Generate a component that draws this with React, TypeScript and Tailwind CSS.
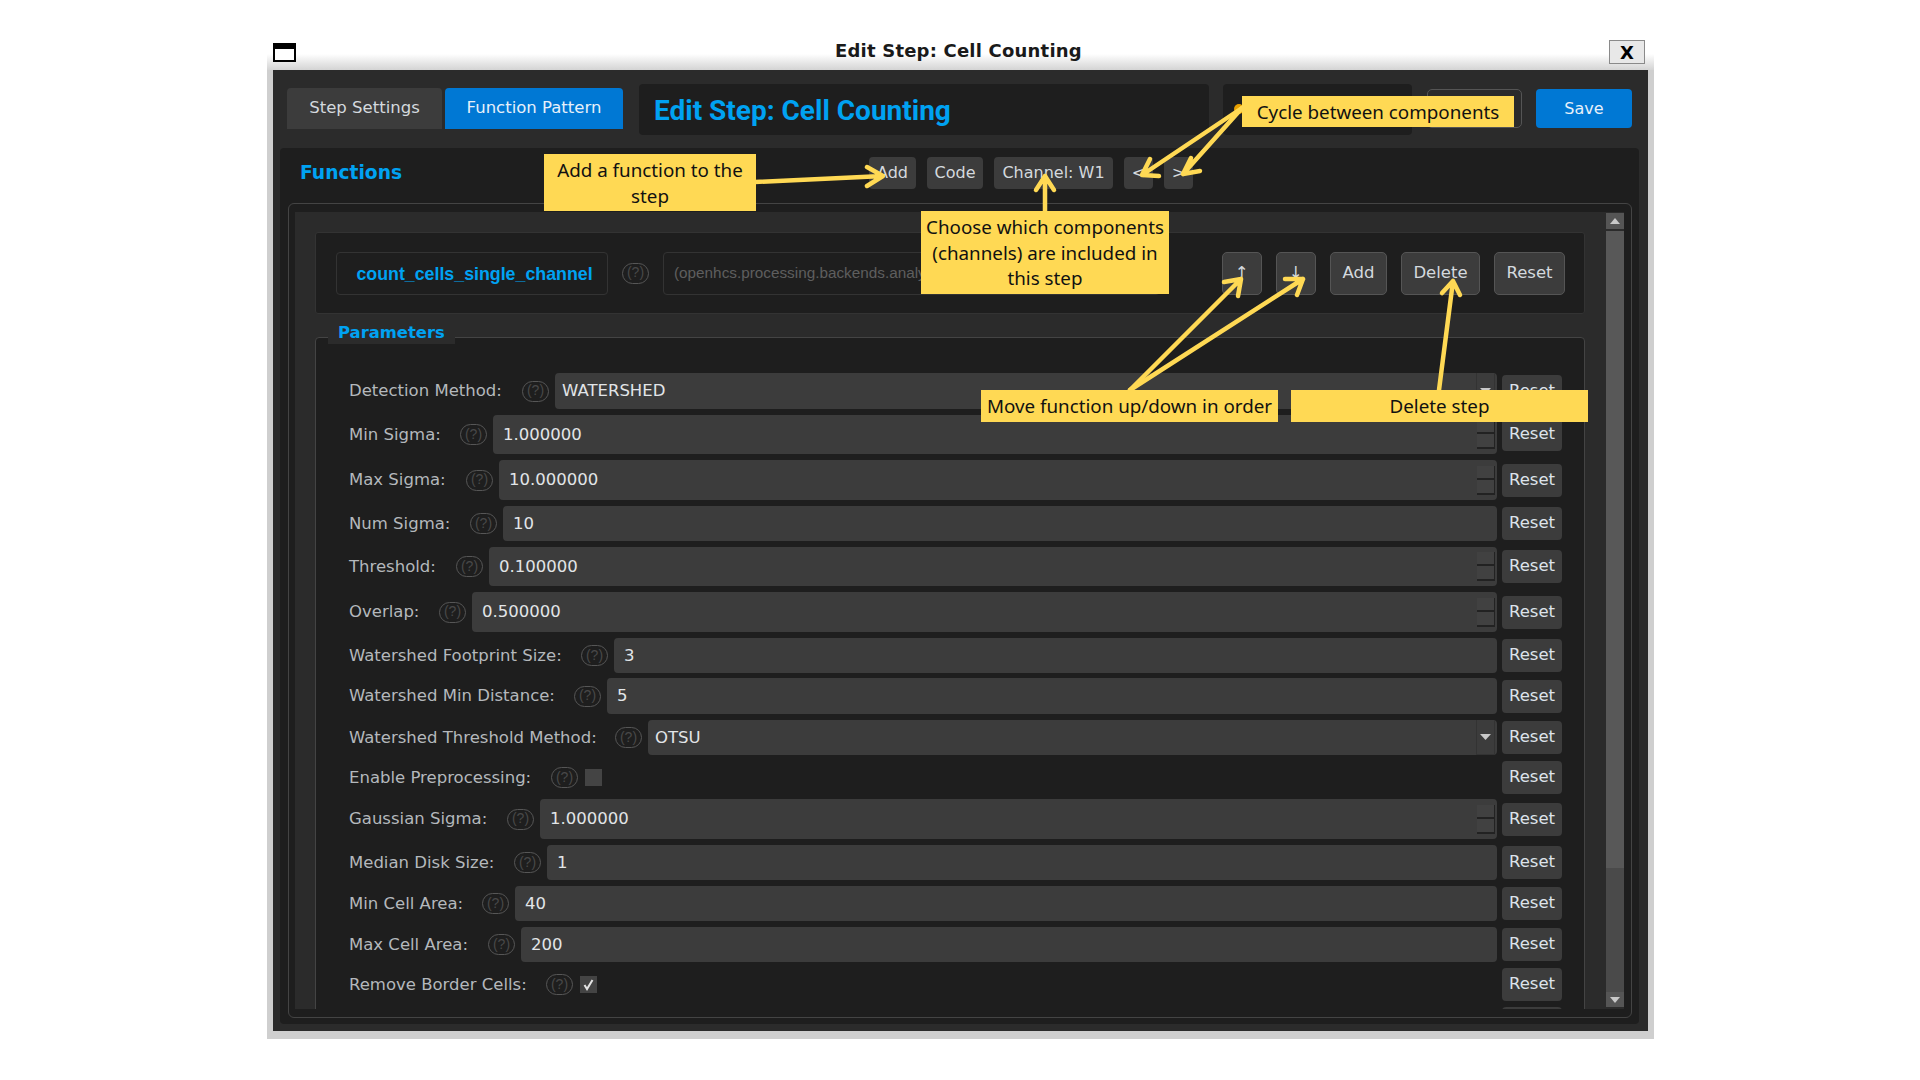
import React from "react";

type Row = {
  label: string;
  labelW: string;
  h: string;
  kind: "spin" | "plain" | "combo" | "check";
  value?: string;
  pad?: string;
  checked?: boolean;
  extra?: string;
};

const rows: Row[] = [
  { label: "Detection Method:", labelW: "w-[173px]", h: "h-[36px]", kind: "combo", value: "WATERSHED", pad: "pl-[7px]" },
  { label: "Min Sigma:", labelW: "w-[111px]", h: "h-[39px]", kind: "spin", value: "1.000000", pad: "pl-[10px]" },
  { label: "Max Sigma:", labelW: "w-[117px]", h: "h-[40px]", kind: "spin", value: "10.000000", pad: "pl-[10px]" },
  { label: "Num Sigma:", labelW: "w-[121px]", h: "h-[35px]", kind: "plain", value: "10", pad: "pl-[10px]" },
  { label: "Threshold:", labelW: "w-[107px]", h: "h-[39px]", kind: "spin", value: "0.100000", pad: "pl-[10px]" },
  { label: "Overlap:", labelW: "w-[90px]", h: "h-[40px]", kind: "spin", value: "0.500000", pad: "pl-[10px]" },
  { label: "Watershed Footprint Size:", labelW: "w-[232px]", h: "h-[35px]", kind: "plain", value: "3", pad: "pl-[10px]" },
  { label: "Watershed Min Distance:", labelW: "w-[225px]", h: "h-[36px]", kind: "plain", value: "5", pad: "pl-[10px]", extra: "-mt-px" },
  { label: "Watershed Threshold Method:", labelW: "w-[266px]", h: "h-[35px]", kind: "combo", value: "OTSU", pad: "pl-[7px]" },
  { label: "Enable Preprocessing:", labelW: "w-[202px]", h: "h-[33px]", kind: "check" },
  { label: "Gaussian Sigma:", labelW: "w-[158px]", h: "h-[40px]", kind: "spin", value: "1.000000", pad: "pl-[10px]", extra: "-mt-px" },
  { label: "Median Disk Size:", labelW: "w-[165px]", h: "h-[35px]", kind: "plain", value: "1", pad: "pl-[10px]" },
  { label: "Min Cell Area:", labelW: "w-[133px]", h: "h-[35px]", kind: "plain", value: "40", pad: "pl-[10px]" },
  { label: "Max Cell Area:", labelW: "w-[139px]", h: "h-[35px]", kind: "plain", value: "200", pad: "pl-[10px]" },
  { label: "Remove Border Cells:", labelW: "w-[197px]", h: "h-[33px]", kind: "check", checked: true },
];

const ui = { fontFamily: '"DejaVu Sans", sans-serif' };

function Help() {
  return (
    <span className="flex h-[21px] w-[27px] shrink-0 items-center justify-center rounded-full border border-[#565656] pb-[1px] text-[14px] text-[#484848] font-['Liberation_Sans',sans-serif]">
      (?)
    </span>
  );
}

function Spinner() {
  return (
    <span className="mr-[2px] flex w-[18px] shrink-0 flex-col">
      <span className="h-[14px] border-r border-b-2 border-[#222222] bg-[#414141]" />
      <span className="h-[15px] border-r border-b-2 border-[#222222] bg-[#414141]" />
    </span>
  );
}

function ComboArrow() {
  return (
    <span className="mr-[2px] flex h-full w-[19px] shrink-0 items-center justify-center border-l border-b border-r border-[#333333] bg-[#3c3c3c]">
      <svg width="11" height="6" viewBox="0 0 11 6">
        <path d="M0 0h11L5.5 6z" fill="#c8c8c8" />
      </svg>
    </span>
  );
}

function ResetButton() {
  return (
    <button className="flex h-[33px] w-[60px] shrink-0 items-center justify-center rounded-[4px] bg-[#3c3c3c] text-[16.5px] text-[#dde3ea]">
      Reset
    </button>
  );
}

function ParamRow({ row }: { row: Row }) {
  return (
    <div className={`flex items-center ${row.h} ${row.extra ?? ""}`}>
      <span className={`${row.labelW} shrink-0 whitespace-nowrap pt-[1px] text-[16.5px] text-[#b4b8bc]`}>{row.label}</span>
      <Help />
      {row.kind === "check" ? (
        <div className="flex flex-1 items-center pl-[7px]">
          <span className="flex h-[17px] w-[17px] items-center justify-center bg-[#444444]">
            {row.checked && (
              <svg width="13" height="13" viewBox="0 0 13 13">
                <path d="M2.5 7l2.5 4 5.5-9" fill="none" stroke="#e4e4e4" strokeWidth="2" />
              </svg>
            )}
          </span>
        </div>
      ) : (
        <div
          className={`ml-[6px] flex h-full flex-1 items-center justify-between rounded-[4px] bg-[#3c3c3c] ${row.pad} text-[16.5px] text-[#e2e5e8]`}
        >
          <span className="pt-[1px]">{row.value}</span>
          {row.kind === "spin" && <Spinner />}
          {row.kind === "combo" && <ComboArrow />}
        </div>
      )}
      <div className="ml-[5px] flex">
        <ResetButton />
      </div>
    </div>
  );
}

function ToolButton({ w, children }: { w: string; children: React.ReactNode }) {
  return (
    <button
      className={`flex h-[32px] ${w} items-center justify-center rounded-[4px] bg-[#3c3c3c] text-[16px] text-[#d4d9de]`}
    >
      {children}
    </button>
  );
}

function CardButton({ w, children }: { w: string; children: React.ReactNode }) {
  return (
    <button
      className={`flex h-[43px] ${w} items-center justify-center rounded-[5px] border border-[#555555] bg-[#3c3c3c] text-[16.5px] text-[#d4d9de]`}
    >
      {children}
    </button>
  );
}

const callout =
  "absolute flex items-center justify-center bg-[#ffd954] pt-[2px] text-center text-[18.8px] leading-[25.5px] text-[#111111] font-['Noto_Sans',sans-serif]";

function Arrows() {
  const lines = [
    "M755 182L883 176M867 167L883 176L867 186",
    "M1045 211V176M1036 190L1045 176L1054 190",
    "M1242 108L1142 175M1150 159L1142 175L1159 176",
    "M1242 108L1183 174M1191 158L1183 174L1200 171",
    "M1130 390L1241 279M1224 282L1241 279L1238 296",
    "M1130 390L1303 279M1285 279L1303 279L1297 295",
    "M1439 390L1453 281M1442 293L1453 281L1460 295",
  ];
  return (
    <svg className="absolute left-0 top-0" width="1920" height="1080" viewBox="0 0 1920 1080">
      <circle cx="1239" cy="109" r="5" fill="#e8a000" />
      {lines.map((d) => (
        <path key={d} d={d} fill="none" stroke="#ffd954" strokeWidth="4.5" strokeLinecap="round" strokeLinejoin="round" />
      ))}
    </svg>
  );
}

export default function App() {
  return (
    <div className="relative h-[1080px] w-[1920px] overflow-hidden bg-white" style={ui}>
      <div className="ml-[267px] w-[1387px] pt-[38px]">
        {/* title bar */}
        <div className="relative flex h-[32px] items-start justify-between bg-gradient-to-b from-white from-50% to-[#d4d4d4] pl-[6px]">
          <span className="mt-[5px] block h-[19px] w-[23px] border-2 border-t-[6px] border-black bg-white" />
          <span className="absolute left-[568px] -top-[1px] text-[18px] font-bold tracking-[0.2px] text-[#1a1a1a]">
            Edit Step: Cell Counting
          </span>
          <span className="mr-[9px] mt-[2px] flex h-[24px] w-[36px] items-center justify-center border border-[#8a8a8a] bg-[#e8e8e8] text-[18px] font-bold text-black">
            X
          </span>
        </div>
        {/* window body */}
        <div className="h-[969px] border-x-[6px] border-b-[8px] border-[#cfcfcf] bg-[#2b2b2b]">
          <div className="flex h-[65px] items-start pt-[14px] pl-[14px]">
            <button className="mt-[4px] flex h-[41px] w-[155px] items-center justify-center rounded-t-[4px] bg-[#3c3c3c] text-[16.5px] text-[#d4d9de]">
              Step Settings
            </button>
            <button className="ml-[3px] mt-[4px] flex h-[41px] w-[178px] items-center justify-center rounded-t-[4px] bg-[#0078d4] text-[16.5px] text-[#e6f0fa]">
              Function Pattern
            </button>
            <div className="ml-[16px] flex h-[51px] w-[570px] items-center rounded-[4px] bg-[#1e1e1e] pl-[15px] pt-[3px] text-[28px] font-bold text-[#00a2f2] font-['Roboto',sans-serif]">
              Edit Step: Cell Counting
            </div>
            <div className="ml-[14px] h-[51px] w-[189px] rounded-[4px] bg-[#1e1e1e]" />
            <div className="ml-[15px] mt-[5px] h-[39px] w-[95px] rounded-[5px] border border-[#555555]" />
            <button className="ml-[14px] mt-[5px] flex h-[39px] w-[96px] items-center justify-center rounded-[4px] bg-[#0078d4] text-[16px] text-[#e6f0fa]">
              Save
            </button>
          </div>
          {/* functions panel */}
          <div className="ml-[7px] mt-[13px] h-[876px] w-[1359px] rounded-[4px] bg-[#1e1e1e]">
            <div className="flex h-[55px] items-start pt-[9px]">
              <div className="flex h-[32px] w-[589px] items-center pl-[20px] pt-[1px] text-[18.7px] font-bold text-[#00a2f2]">
                Functions
              </div>
              <div className="flex gap-[11px]">
                <ToolButton w="w-[47px]">Add</ToolButton>
                <ToolButton w="w-[56px]">Code</ToolButton>
                <ToolButton w="w-[119px]">Channel: W1</ToolButton>
                <ToolButton w="w-[29px]">&lt;</ToolButton>
                <ToolButton w="w-[29px]">&gt;</ToolButton>
              </div>
            </div>
            {/* frame */}
            <div className="ml-[8px] h-[815px] w-[1344px] rounded-[6px] border border-[#444444] pl-[6px] pt-[8px]">
              <div className="flex h-[797px] w-[1329px] overflow-hidden bg-[#2b2b2b]">
                <div className="flex-1 overflow-hidden pl-[20px] pt-[20px]">
                  <div className="flex h-[82px] w-[1270px] items-center rounded-[3px] border border-[#333333] bg-[#1e1e1e] pl-[20px]">
                    <div className="flex h-[43px] w-[272px] items-center justify-center rounded-[4px] border border-[#333333] pl-[5px] pt-[2px] text-[17.8px] font-bold text-[#00a2f2] font-['Liberation_Sans',sans-serif]">
                      count_cells_single_channel
                    </div>
                    <div className="ml-[14px]">
                      <Help />
                    </div>
                    <div className="ml-[14px] flex h-[43px] w-[497px] items-center overflow-hidden whitespace-nowrap rounded-[4px] border border-[#333333] pl-[10px] pt-[1px] text-[15.3px] text-[#5e5e5e] font-['Liberation_Sans',sans-serif]">
                      (openhcs.processing.backends.analysis.cell_counting_cpu)
                    </div>
                    <div className="ml-[62px] flex gap-[14px]">
                      <CardButton w="w-[40px]">↑</CardButton>
                      <CardButton w="w-[40px]">↓</CardButton>
                      <CardButton w="w-[57px]">Add</CardButton>
                      <CardButton w="w-[79px]">Delete</CardButton>
                      <CardButton w="w-[71px]">Reset</CardButton>
                    </div>
                  </div>
                  {/* parameters */}
                  <div className="relative mt-[23px] w-[1270px] rounded-t-[4px] border border-[#444444] bg-[#1e1e1e] pb-[40px] pl-[33px] pr-[22px] pt-[35px]">
                    <span className="absolute -top-[16px] left-[12px] flex h-[22px] w-[127px] items-center bg-[#2b2b2b] pl-[10px] text-[16.4px] font-bold text-[#00a2f2]">
                      Parameters
                    </span>
                    <div className="flex flex-col gap-[6px]">
                      {rows.map((r) => (
                        <ParamRow key={r.label} row={r} />
                      ))}
                      <div className="flex justify-end">
                        <ResetButton />
                      </div>
                    </div>
                  </div>
                </div>
                {/* scrollbar */}
                <div className="flex w-[18px] shrink-0 flex-col pt-[1px]">
                  <div className="flex h-[16px] items-center justify-center bg-[#555555]">
                    <svg width="10" height="6" viewBox="0 0 10 6">
                      <path d="M0 6h10L5 0z" fill="#c8c8c8" />
                    </svg>
                  </div>
                  <div className="mt-[2px] h-[637px] bg-[#585858]" />
                  <div className="h-[124px] bg-[#4a4a4a]" />
                  <div className="flex h-[15px] items-center justify-center bg-[#555555]">
                    <svg width="10" height="6" viewBox="0 0 10 6">
                      <path d="M0 0h10L5 6z" fill="#c8c8c8" />
                    </svg>
                  </div>
                </div>
              </div>
            </div>
          </div>
        </div>
      </div>

      <Arrows />
      <div className={`${callout} left-[544px] top-[154px] h-[57px] w-[212px]`}>
        Add a function to the
        <br />
        step
      </div>
      <div className={`${callout} left-[921px] top-[211px] h-[83px] w-[248px]`}>
        Choose which components
        <br />
        (channels) are included in
        <br />
        this step
      </div>
      <div className={`${callout} left-[1242px] top-[96px] h-[31px] w-[272px]`}>Cycle between components</div>
      <div className={`${callout} left-[981px] top-[390px] h-[32px] w-[297px]`}>Move function up/down in order</div>
      <div className={`${callout} left-[1291px] top-[390px] h-[32px] w-[297px]`}>Delete step</div>
    </div>
  );
}
